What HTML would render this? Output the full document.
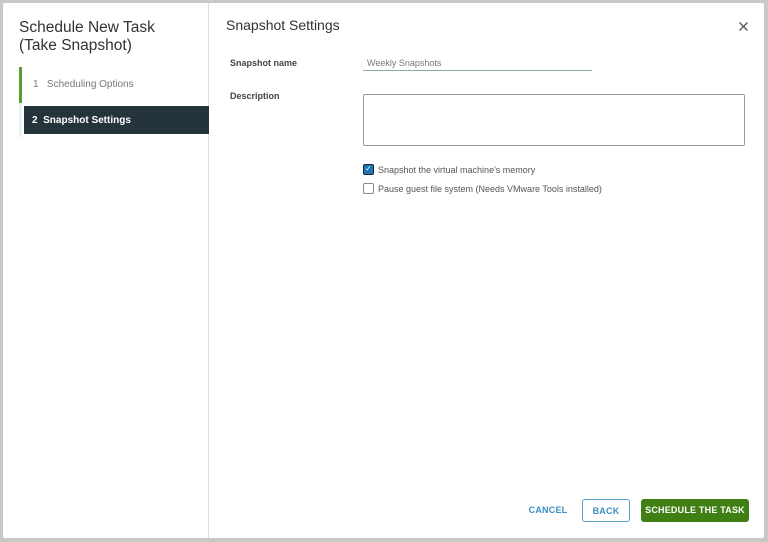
<!DOCTYPE html>
<html><head><style>
*{box-sizing:border-box;margin:0;padding:0}
body{width:768px;height:542px;background:#c8c8c8;font-family:"Liberation Sans",sans-serif;position:relative;overflow:hidden}
.dlg{position:absolute;left:3px;top:3px;width:761px;height:535px;background:#fff;border-radius:2px}
.side{position:absolute;left:0;top:0;width:206px;height:535px;border-right:1px solid #ddd}
h1{position:absolute;left:16px;top:16px;font-size:15.5px;font-weight:normal;color:#333;line-height:18px}
.s1{position:absolute;left:16px;top:64px;width:190px;height:36px;border-left:3px solid #5b9d2e;font-size:10px;color:#777;padding:12px 0 0 11px}
.s2{position:absolute;left:21px;top:103px;width:185px;height:28px;background:#25333b;color:#fff;font-size:10px;font-weight:bold;padding:9px 0 0 8px}
.s2l{position:absolute;left:16px;top:100px;width:3px;height:34px;background:#eef3f6}
h2{position:absolute;left:223px;top:14px;font-size:14px;font-weight:normal;color:#333}
.x{position:absolute;left:736px;top:19px}
.lbl{position:absolute;left:227px;font-size:9px;font-weight:bold;color:#444}
.inp{position:absolute;left:360px;top:52px;width:229px;height:16px;border-bottom:1px solid #8aa;font-size:9px;color:#777;padding:3px 0 0 4px}
.ta{position:absolute;left:360px;top:91px;width:382px;height:52px;border:1px solid #999;border-radius:2px}
.cb{position:absolute;left:360px;width:11px;height:11px;border:1px solid #888;border-radius:2px;background:#fff}
.cbt{position:absolute;left:375px;font-size:9px;color:#555}
.chk{background:#1a76b5;border:1.5px solid #1b2a33;color:#fff;font-size:8px;line-height:8px;text-align:center}
.btn{position:absolute;top:496px;height:23px;font-size:9px;font-weight:bold;letter-spacing:.2px;text-align:center;line-height:22px;border-radius:3px}
</style></head><body>
<div class="dlg">
<div class="side">
<h1>Schedule New Task<br>(Take Snapshot)</h1>
<div class="s1">1&nbsp;&nbsp;&nbsp;Scheduling Options</div>
<div class="s2l"></div>
<div class="s2">2&nbsp;&nbsp;Snapshot Settings</div>
</div>
<h2>Snapshot Settings</h2>
<svg class="x" width="9" height="9" viewBox="0 0 9 9"><path d="M0.5 0.5L8.5 8.5M8.5 0.5L0.5 8.5" stroke="#555" stroke-width="1.3"/></svg>
<div class="lbl" style="top:55px">Snapshot name</div>
<div class="inp">Weekly Snapshots</div>
<div class="lbl" style="top:88px">Description</div>
<div class="ta"></div>
<div class="cb chk" style="top:161px">✓</div>
<div class="cbt" style="top:162px">Snapshot the virtual machine's memory</div>
<div class="cb" style="top:180px"></div>
<div class="cbt" style="top:181px">Pause guest file system (Needs VMware Tools installed)</div>
<div class="btn" style="left:520px;width:50px;color:#3a8fc0">CANCEL</div>
<div class="btn" style="left:579px;width:48px;border:1px solid #5aa0cc;color:#3a8fc0">BACK</div>
<div class="btn" style="left:638px;width:108px;background:#3f7f14;color:#fff">SCHEDULE THE TASK</div>
</div>
</body></html>
